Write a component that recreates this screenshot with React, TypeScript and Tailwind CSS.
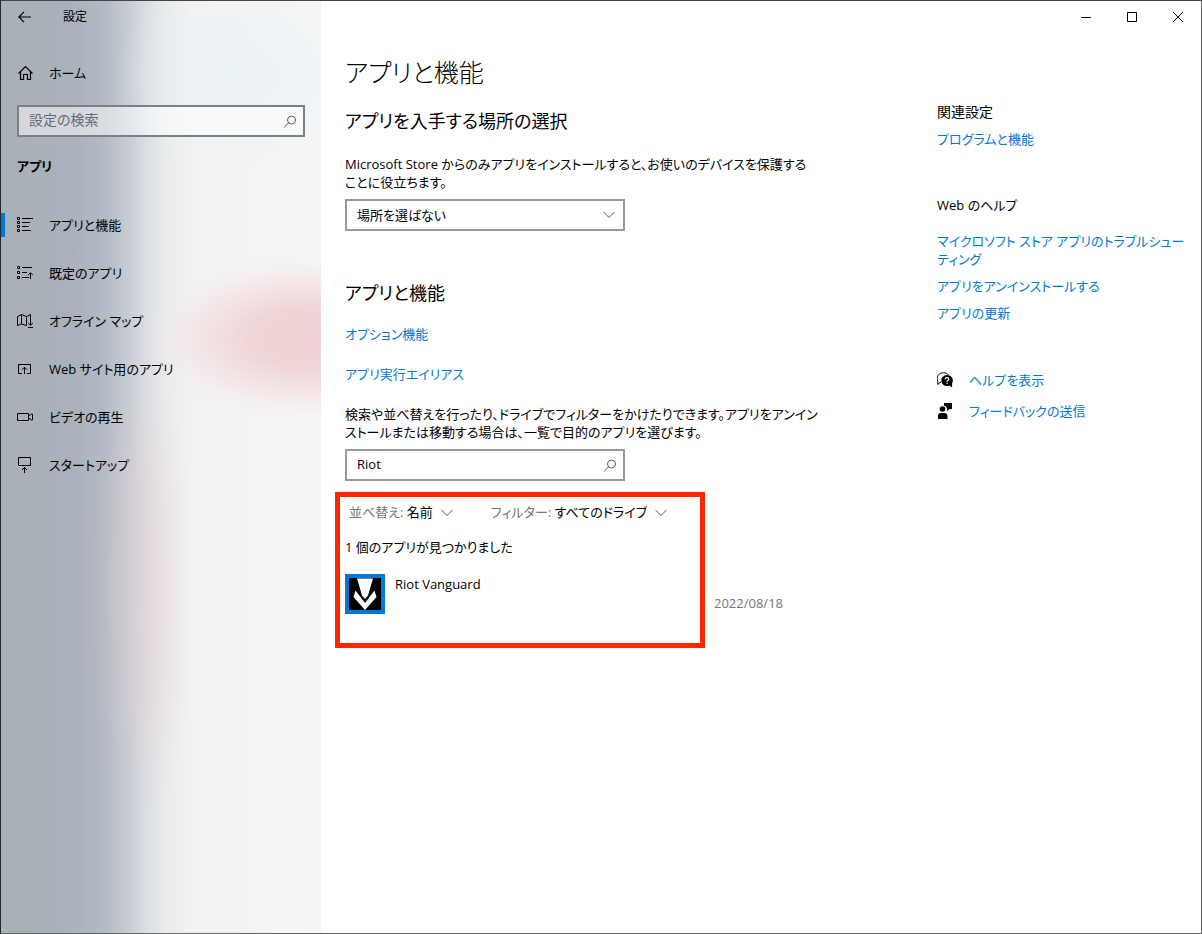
import { useState } from 'react';
import type { ReactNode } from 'react';

interface NavItem {
  label: string;
  icon: ReactNode;
}

interface IconProps {
  children: ReactNode;
}

function Icon({ children }: IconProps) {
  return (
    <svg width="16" height="16" viewBox="0 0 16 16" fill="none" stroke="currentColor" className="shrink-0" aria-hidden="true">
      {children}
    </svg>
  );
}

function SearchIcon({ className }: { className: string }) {
  return (
    <svg width="14" height="14" viewBox="0 0 14 14" fill="none" stroke="currentColor" className={className} aria-hidden="true">
      <circle cx="8.5" cy="5" r="4" />
      <path d="M5.6 7.9 1 12.5" />
    </svg>
  );
}

function ChevronIcon({ className }: { className: string }) {
  return (
    <svg width="12" height="8" viewBox="0 0 12 8" fill="none" stroke="currentColor" className={className} aria-hidden="true">
      <path d="M0.5 1 6 6.5 11.5 1" />
    </svg>
  );
}

const navItems: NavItem[] = [
  {
    label: 'アプリと機能',
    icon: (
      <Icon>
        <path d="M.5.5h2v2h-2zM.5 4.5h2v2h-2zM.5 8.5h2v2h-2zM.5 12.5h2v2h-2z" />
        <path d="M5 1.5h11M5 5.5h8M5 9.5h7M5 13.5h9" />
      </Icon>
    ),
  },
  {
    label: '既定のアプリ',
    icon: (
      <Icon>
        <path d="M.5 1.5h2v2h-2zM.5 6.5h2v2h-2zM.5 11.5h2v2h-2z" />
        <path d="M5 2.5h10M5 7.5h5M5 12.5h7M13.5 14V8M11 10.2l2.5-2.5 2.5 2.5" />
      </Icon>
    ),
  },
  {
    label: 'オフライン マップ',
    icon: (
      <Icon>
        <path d="M.5 3.5 4.5 1.500l5 2 4-2V7M.5 3.500v9l4-1.500 5 1.500M4.500 1.500V11M9.500 3.500v9" />
        <path d="M13.500 5V12M11 9.800l2.500 2.500L16 9.800M11 14.500h5" />
      </Icon>
    ),
  },
  {
    label: 'Web サイト用のアプリ',
    icon: (
      <Icon>
        <path d="M5 12.500H1.500v-9h12v9H10M7.500 13V6.500M5 8.700l2.500-2.500L10 8.700" />
      </Icon>
    ),
  },
  {
    label: 'ビデオの再生',
    icon: (
      <Icon>
        <path d="M.5 4.500h11v7H.5zM11.500 7l3-2h1v6h-1l-3-2" />
      </Icon>
    ),
  },
  {
    label: 'スタートアップ',
    icon: (
      <Icon>
        <path d="M1.500.5h12v8h-12zM7.500 16v-5.500M5 13l2.500-2.500L10 13" />
      </Icon>
    ),
  },
];

function Sidebar() {
  const [current, setCurrent] = useState('アプリと機能');

  return (
    <aside className="w-80 shrink-0 bg-[radial-gradient(ellipse_170px_85px_at_310px_337px,#efcfd1ee_0%,#efcfd1dd_35%,#f2dadcaa_60%,#f5e6e655_82%,transparent_100%),radial-gradient(ellipse_50px_230px_at_142px_590px,#ecc8cc50_0%,#ecc8cc40_50%,#ecc8cc18_80%,transparent_100%),radial-gradient(ellipse_130px_100px_at_240px_75px,#e6f1f5aa_0%,transparent_100%),linear-gradient(90deg,#a8b0b8_0px,#a9b1ba_70px,#b3bbc4_105px,#c6cdd4_128px,#dbdfe3_146px,#e9ebec_164px,#f2f2f3_190px,#f6f6f6_320px)]">
      <header className="flex h-8 items-center">
        <button aria-label="戻る" className="flex h-8 w-12 items-center justify-center">
          <svg width="14" height="12" viewBox="0 0 14 12" fill="none" stroke="currentColor" strokeWidth="1.2" aria-hidden="true">
            <path d="M13 6H1M6 .8.8 6 6 11.200" />
          </svg>
        </button>
        <span className="ml-3.5 text-xs leading-6">設定</span>
      </header>

      <a href="#home" className="mt-4 flex h-12 items-center gap-4 px-4">
        <svg width="16" height="16" viewBox="0 0 16 16" fill="none" stroke="currentColor" strokeWidth="1.2" aria-hidden="true">
          <path d="M1.500 8.500 8.500 1.500l7 7M3.500 7v7.500h3v-5h4v5h3V7" />
        </svg>
        ホーム
      </a>

      <div className="relative mx-4 mt-2">
        <input
          type="search"
          aria-label="設定の検索"
          placeholder="設定の検索"
          className="h-8 w-full border-2 border-[#7c8084] bg-white/50 px-2.5 pb-1 text-sm outline-none placeholder:text-[#666a6e]"
        />
        <SearchIcon className="absolute top-2.5 right-2 text-[#5a5a5a]" />
      </div>

      <h2 className="mt-5 px-4 font-bold">アプリ</h2>

      <nav className="mt-6.5">
        {navItems.map(item => (
          <button
            key={item.label}
            onClick={() => setCurrent(item.label)}
            className="relative flex h-12 w-full items-center gap-4 px-4 text-left"
          >
            {current === item.label && <span className="absolute top-3 left-0 h-6 w-1 bg-[#0078d7]" />}
            {item.icon}
            {item.label}
          </button>
        ))}
      </nav>
    </aside>
  );
}

function WindowControls() {
  return (
    <div className="flex h-8 justify-end">
      <button aria-label="最小化" className="flex w-11.5 items-center justify-center">
        <svg width="10" height="10" viewBox="0 0 10 10" stroke="currentColor" aria-hidden="true">
          <path d="M0 5.500h10" />
        </svg>
      </button>
      <button aria-label="最大化" className="flex w-11.5 items-center justify-center">
        <svg width="10" height="10" viewBox="0 0 10 10" fill="none" stroke="currentColor" aria-hidden="true">
          <path d="M.5.5h9v9h-9z" />
        </svg>
      </button>
      <button aria-label="閉じる" className="flex w-11.5 items-center justify-center">
        <svg width="10" height="10" viewBox="0 0 10 10" stroke="currentColor" aria-hidden="true">
          <path d="M0 0l10 10M10 0 0 10" />
        </svg>
      </button>
    </div>
  );
}

function AppList() {
  return (
    <section className="relative mt-5.5">
      <div className="flex items-center gap-8.5 pl-1">
        <div className="relative flex items-center">
          <label htmlFor="sort" className="text-[#767676]">並べ替え:&nbsp;</label>
          <select id="sort" className="field-sizing-content appearance-none bg-transparent pr-6 outline-none">
            <option>名前</option>
            <option>サイズ</option>
            <option>インストール日付</option>
          </select>
          <ChevronIcon className="pointer-events-none absolute top-1.5 right-1 text-[#555]" />
        </div>
        <div className="relative flex items-center">
          <label htmlFor="filter" className="text-[#767676]">フィルター:&nbsp;</label>
          <select id="filter" className="field-sizing-content appearance-none bg-transparent pr-6 outline-none">
            <option>すべてのドライブ</option>
            <option>Windows (C:)</option>
          </select>
          <ChevronIcon className="pointer-events-none absolute top-1.5 right-1 text-[#555]" />
        </div>
      </div>
      <p className="mt-[17px]">1 個のアプリが見つかりました</p>
      <div className="mt-4.5 flex gap-2.5">
        <svg width="40" height="40" viewBox="0 0 40 40" aria-hidden="true">
          <path fill="#0078d7" d="M0 0h40v40H0z" />
          <path fill="#000" d="M4 4h32v32H4z" />
          <path fill="#fff" d="M12 4.500h16L23 21.500 20 25 17 21.500zM10.500 16.500 20 29l9.500-12.500 2 6.500L20 36 8.500 23z" />
        </svg>
        <p className="grow pt-px">Riot Vanguard</p>
        <p className="mt-5 mr-10.5 text-[#767676]">2022/08/18</p>
      </div>
      {/* highlight frame around the search result */}
      <div className="pointer-events-none absolute -top-[11px] -left-2.5 h-39 w-92.5 border-5 border-[#ff2600]" />
    </section>
  );
}

function MainContent() {
  return (
    <div className="w-120">
      <h1 className="mt-5 text-[25px] leading-[38px] font-light">アプリと機能</h1>

      <h2 className="mt-4 text-lg leading-7">アプリを入手する場所の選択</h2>
      <p className="mt-5 pr-3">
        Microsoft Store からのみアプリをインストールすると、お使いのデバイスを保護することに役立ちます。
      </p>
      <div className="relative mt-2 w-70">
        <select
          aria-label="アプリを入手する場所"
          className="h-8 w-full appearance-none border-2 border-[#999] bg-white px-2.5 outline-none"
        >
          <option>場所を選ばない</option>
          <option>Microsoft Store のみ</option>
        </select>
        <ChevronIcon className="pointer-events-none absolute top-3 right-2.5 text-[#555]" />
      </div>

      <h2 className="mt-12 text-lg leading-7">アプリと機能</h2>
      <a href="#optional" className="mt-4.5 block text-[#0078d7]">オプション機能</a>
      <a href="#aliases" className="mt-5.5 block text-[#0078d7]">アプリ実行エイリアス</a>
      <p className="mt-5.5">
        検索や並べ替えを行ったり、ドライブでフィルターをかけたりできます。アプリをアンインストールまたは移動する場合は、一覧で目的のアプリを選びます。
      </p>
      <div className="relative mt-2 w-70">
        <input
          type="search"
          aria-label="この一覧を検索"
          defaultValue="Riot"
          className="h-8 w-full border-2 border-[#999] bg-white px-2.5 pb-0.5 outline-none"
        />
        <SearchIcon className="absolute top-2.5 right-2 text-[#5a5a5a]" />
      </div>

      <AppList />
    </div>
  );
}

function RelatedLinks() {
  return (
    <aside className="mt-17.5 w-64 shrink-0">
      <h3 className="text-sm leading-[18px]">関連設定</h3>
      <a href="#programs" className="mt-[9px] block text-[#0078d7]">プログラムと機能</a>

      <h3 className="mt-12">Web のヘルプ</h3>
      <div className="mt-4.5 flex flex-col gap-[9px] text-[#0078d7]">
        <a href="#troubleshoot">マイクロソフト ストア アプリのトラブルシューティング</a>
        <a href="#uninstall">アプリをアンインストールする</a>
        <a href="#update">アプリの更新</a>
      </div>

      <div className="mt-[49px] flex flex-col gap-[13px] text-[#0078d7]">
        <a href="#help" className="flex items-center gap-4">
          <svg width="16" height="16" viewBox="0 0 16 16" className="text-black" aria-hidden="true">
            <path fill="none" stroke="currentColor" d="M4 10.500H3L.8 12.500V9.500C0 8 0 5 1 3.500 2.200 1.500 4.200.8 6.500.8c2.400 0 4 .9 5 2.200" />
            <path fill="currentColor" d="M10 3a5.800 5.500 0 0 1 5.100 8.200V15.500L12.500 13.500A5.800 5.500 0 1 1 10 3z" />
            <path fill="none" stroke="#fff" strokeWidth="1.200" d="M8.200 7.200c0-2.200 3.600-2.200 3.600 0 0 1.300-1.800 1.200-1.800 2.600M10 10.700v1.200" />
          </svg>
          ヘルプを表示
        </a>
        <a href="#feedback" className="flex items-center gap-4">
          <svg width="16" height="16" viewBox="0 0 16 16" fill="currentColor" className="text-black" aria-hidden="true">
            <path d="M7 0h8v6h-2.500L10 8V5.500A4 4 0 0 0 7 2.500z" />
            <circle cx="5.500" cy="6" r="2.800" />
            <path d="M1 16v-3q0-3 3-3h3q3.500 0 3.500 3v3z" />
          </svg>
          フィードバックの送信
        </a>
      </div>
    </aside>
  );
}

export default function App() {
  return (
    <div className="flex min-h-screen border border-t-[#444] border-r-[#666] border-b-[#666] border-l-[#25272b] bg-white font-['Open_Sans','Noto_Sans_CJK_JP',sans-serif] text-[13px] leading-[18px] text-black [font-feature-settings:'palt']">
      <Sidebar />
      <main className="flex min-w-0 grow flex-col">
        <WindowControls />
        <div className="flex grow justify-between pr-2 pl-6">
          <MainContent />
          <RelatedLinks />
        </div>
      </main>
    </div>
  );
}
